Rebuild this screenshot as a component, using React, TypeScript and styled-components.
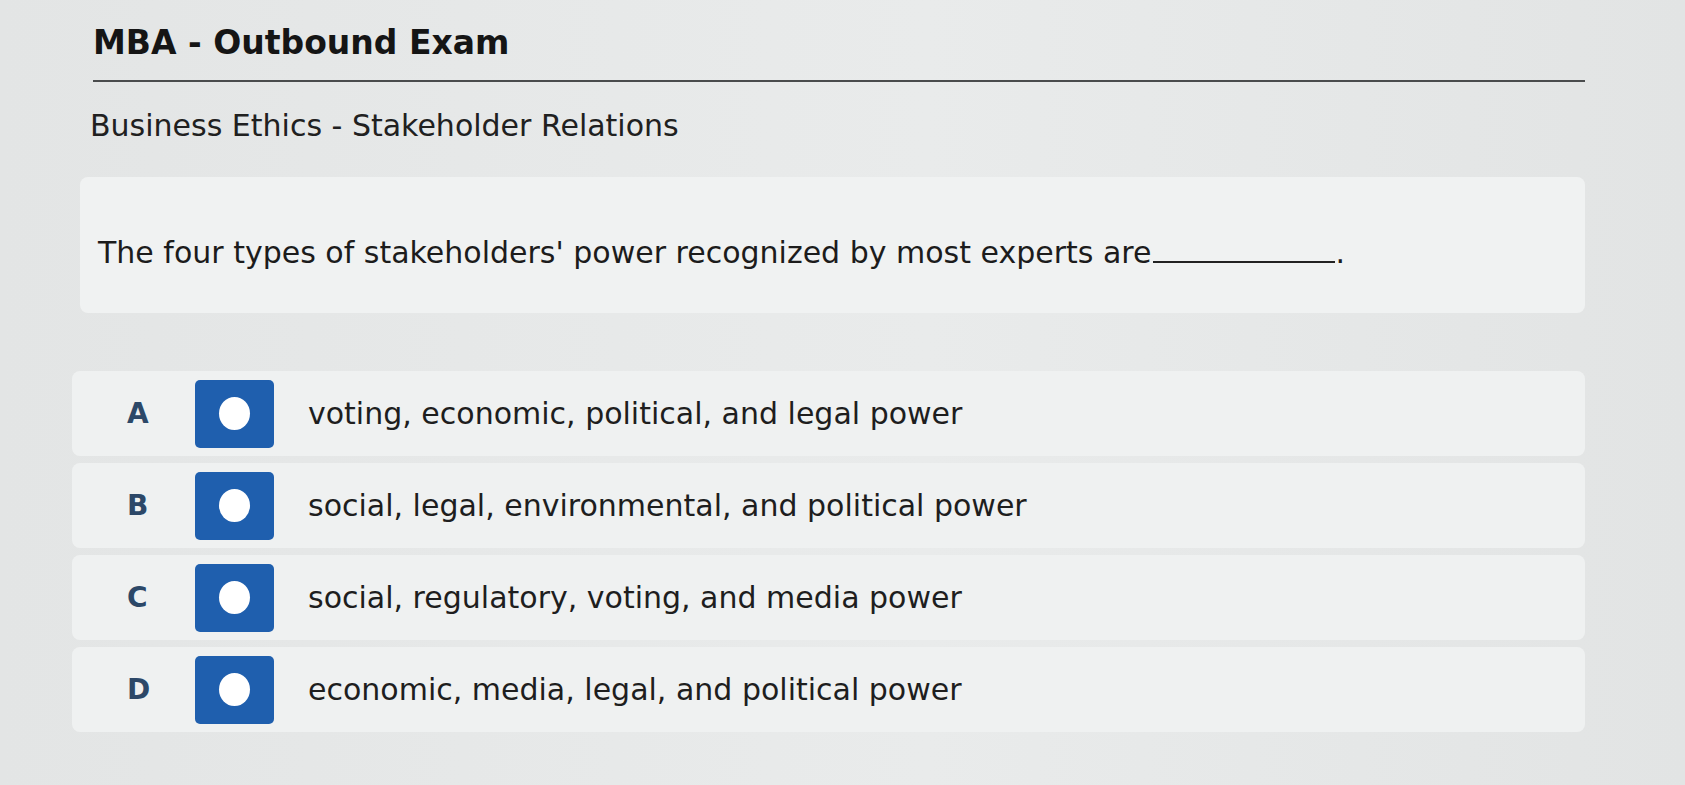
import React, { useState } from "react";
import styled, { createGlobalStyle } from "styled-components";

const GlobalStyle = createGlobalStyle`
   html, body {
      margin: 0;
      padding: 0;
      background: #e5e7e7;
      font-family: "DejaVu Sans", Verdana, sans-serif;
      color: #1e1e1e;
   }
`;

const Page = styled.div`
   width: 1685px;
   height: 785px;
   box-sizing: border-box;
   padding: 22px 100px 0 72px;
   display: flex;
   flex-direction: column;
   background: linear-gradient(90deg, #e3e5e5 0%, #e9ebeb 55%, #e2e4e4 100%);
   overflow: hidden;
`;

const Title = styled.h1`
   margin: 0 0 0 21px;
   font-size: 33px;
   font-weight: bold;
   line-height: 42px;
   color: #151515;
`;

const Rule = styled.hr`
   margin: 16px 0 0 21px;
   border: none;
   border-top: 2px solid #4a4c4d;
`;

const Subtitle = styled.h2`
   margin: 26px 0 0 18px;
   font-size: 30px;
   font-weight: normal;
   line-height: 36px;
   color: #202020;
`;

const QuestionBox = styled.div`
   margin-top: 33px;
   margin-left: 8px;
   padding: 54px 18px 42px;
   background: #f0f2f2;
   border-radius: 8px;
   font-size: 30px;
   line-height: 36px;
   color: #1c1c1c;
`;

const Blank = styled.span`
   display: inline-block;
   width: 182px;
   border-bottom: 2px solid #222;
   margin-left: 2px;
   vertical-align: baseline;
   height: 30px;
`;

const Options = styled.div`
   margin-top: 58px;
   display: flex;
   flex-direction: column;
   gap: 7px;
`;

const OptionRow = styled.label`
   display: flex;
   align-items: center;
   height: 85px;
   padding-left: 55px;
   background: #eff1f1;
   border-radius: 8px;
   cursor: pointer;
`;

const Letter = styled.span`
   width: 68px;
   font-size: 28px;
   font-weight: bold;
   color: #2c4868;
`;

const RadioBox = styled.span`
   width: 79px;
   height: 68px;
   border-radius: 5px;
   background: #1f5fae;
   display: flex;
   align-items: center;
   justify-content: center;
   flex-shrink: 0;
`;

const Dot = styled.span<{ $checked: boolean }>`
   width: 31px;
   height: 33px;
   border-radius: 50%;
   background: #ffffff;
   box-shadow: ${(p) => (p.$checked ? "inset 0 0 0 8px #0b3c78" : "none")};
`;

const OptionText = styled.span`
   margin-left: 34px;
   font-size: 30px;
   color: #1e1e1e;
`;

const options = [
   { key: "A", text: "voting, economic, political, and legal power" },
   { key: "B", text: "social, legal, environmental, and political power" },
   { key: "C", text: "social, regulatory, voting, and media power" },
   { key: "D", text: "economic, media, legal, and political power" },
];

export default function App() {
   const [choice, setChoice] = useState("");
   return (
      <>
         <GlobalStyle />
         <Page>
            <Title>MBA - Outbound Exam</Title>
            <Rule />
            <Subtitle>Business Ethics - Stakeholder Relations</Subtitle>
            <QuestionBox>
               The four types of stakeholders' power recognized by most experts are
               <Blank />.
            </QuestionBox>
            <Options>
               {options.map((o) => (
                  <OptionRow key={o.key} onClick={() => setChoice(o.key)}>
                     <Letter>{o.key}</Letter>
                     <RadioBox>
                        <Dot $checked={choice == o.key} />
                     </RadioBox>
                     <OptionText>{o.text}</OptionText>
                  </OptionRow>
               ))}
            </Options>
         </Page>
      </>
   );
}
